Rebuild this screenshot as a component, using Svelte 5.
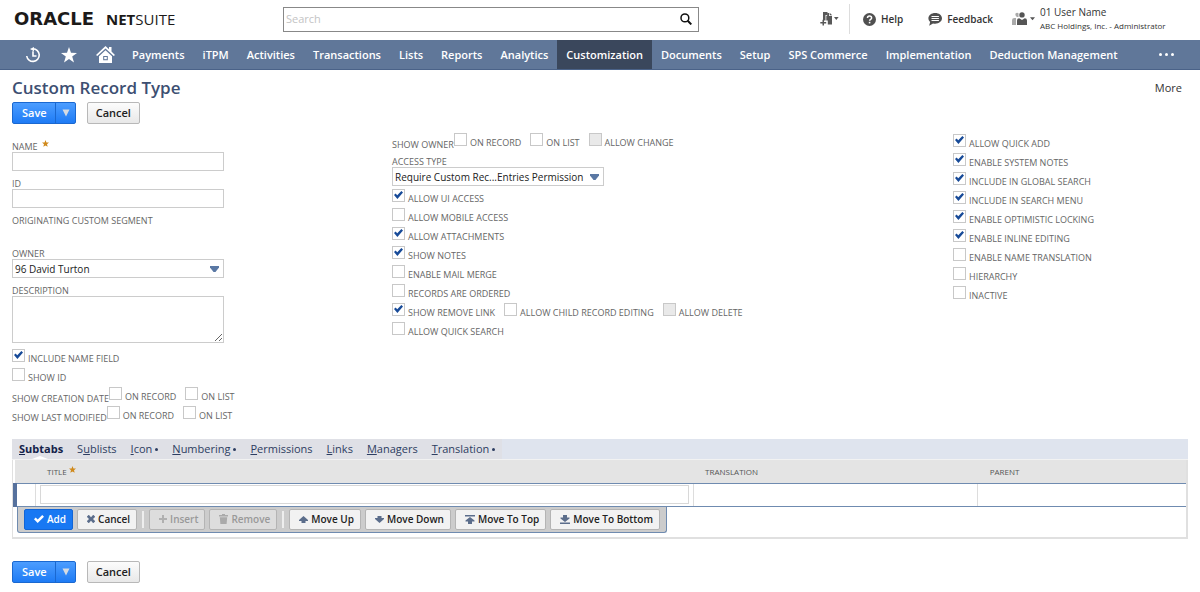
<script>
  const menus = [
    'Payments', 'iTPM', 'Activities', 'Transactions', 'Lists', 'Reports', 'Analytics',
    'Customization', 'Documents', 'Setup', 'SPS Commerce', 'Implementation', 'Deduction Management'
  ];
  const activeMenu = 'Customization';

  const nameOptions = [
    { label: 'INCLUDE NAME FIELD', checked: true },
    { label: 'SHOW ID' }
  ];

  const accessRows = [
    [{ label: 'ALLOW UI ACCESS', checked: true }],
    [{ label: 'ALLOW MOBILE ACCESS' }],
    [{ label: 'ALLOW ATTACHMENTS', checked: true }],
    [{ label: 'SHOW NOTES', checked: true }],
    [{ label: 'ENABLE MAIL MERGE' }],
    [{ label: 'RECORDS ARE ORDERED' }],
    [
      { label: 'SHOW REMOVE LINK', checked: true },
      { label: 'ALLOW CHILD RECORD EDITING' },
      { label: 'ALLOW DELETE', disabled: true }
    ],
    [{ label: 'ALLOW QUICK SEARCH' }]
  ];

  const featureOptions = [
    { label: 'ALLOW QUICK ADD', checked: true },
    { label: 'ENABLE SYSTEM NOTES', checked: true },
    { label: 'INCLUDE IN GLOBAL SEARCH', checked: true },
    { label: 'INCLUDE IN SEARCH MENU', checked: true },
    { label: 'ENABLE OPTIMISTIC LOCKING', checked: true },
    { label: 'ENABLE INLINE EDITING', checked: true },
    { label: 'ENABLE NAME TRANSLATION' },
    { label: 'HIERARCHY' },
    { label: 'INACTIVE' }
  ];

  // Each tab is split around its underlined access key.
  const tabs = [
    { pre: '', key: 'S', post: 'ubtabs' },
    { pre: 'S', key: 'u', post: 'blists' },
    { pre: '', key: 'I', post: 'con', dot: true },
    { pre: '', key: 'N', post: 'umbering', dot: true },
    { pre: '', key: 'P', post: 'ermissions' },
    { pre: '', key: 'L', post: 'inks' },
    { pre: '', key: 'M', post: 'anagers' },
    { pre: '', key: 'T', post: 'ranslation', dot: true }
  ];
  let activeTab = $state(0);
</script>

{#snippet check(item)}
  <label class="check">
    <input type="checkbox" checked={item.checked} disabled={item.disabled} />
    <span>{item.label}</span>
  </label>
{/snippet}

{#snippet saveBar()}
  <div class="actions">
    <div class="split">
      <button type="button" class="save">Save</button>
      <button type="button" class="drop" aria-label="More save options">
        <svg width="8" height="8" viewBox="0 0 8 8"><path d="M0.5 0.5h7L4 7.5z" fill="#d6dbe2" /></svg>
      </button>
    </div>
    <button type="button" class="plain">Cancel</button>
  </div>
{/snippet}

{#snippet star()}
  <svg class="star" width="7" height="7" viewBox="0 0 14 14">
    <path d="M7 0l1.9 4.8 5.1.3-4 3.3 1.4 5.2L7 10.8l-4.4 2.8L4 8.4 0 5.1l5.1-.3z" fill="#d08a1c" />
  </svg>
{/snippet}

<header class="top">
  <a class="logo" href="#home"><span class="oracle">ORACLE</span><span class="netsuite"><b>NET</b>SUITE</span></a>
  <form class="search" role="search">
    <input type="text" placeholder="Search" aria-label="Search" />
    <button type="button" aria-label="Run search">
      <svg width="12" height="12" viewBox="0 0 12 12" fill="none" stroke="#111">
        <circle cx="4.9" cy="4.9" r="3.9" stroke-width="1.5" /><path d="M7.7 7.7L11.3 11.4" stroke-width="2" />
      </svg>
    </button>
  </form>
  <div class="tools">
    <button type="button" class="tool create" aria-label="Create new">
      <svg width="19" height="14" viewBox="0 0 19 14" fill="#585858">
        <path d="M3 0h4.500v3H5.500v5.500H3z" /><path d="M6.300 3.800h.9V1H9v3h3v8.500H7.800V8.500H6.300z" /><path d="M9.700.8l2.500 2.500H9.700z" />
        <path d="M2.500 7.800h1.500v2.100h2.200v1.500H4v2.200H2.500v-2.200H.3V9.900h2.200z" />
        <path d="M14 5h4.600l-2.300 3z" />
      </svg>
    </button>
    <a class="tool help" href="#help">
      <svg width="13" height="13" viewBox="0 0 13 13">
        <circle cx="6.500" cy="6.500" r="6.500" fill="#505050" />
        <path d="M4.500 5.100c0-1.300.9-2 2-2s2.100.7 2.100 1.800c0 1.400-2 1.500-2 2.900" fill="none" stroke="#fff" stroke-width="1.500" />
        <rect x="5.800" y="8.800" width="1.600" height="1.600" fill="#fff" />
      </svg>
      Help
    </a>
    <a class="tool feedback" href="#feedback">
      <svg width="14" height="13" viewBox="0 0 14 13">
        <path d="M7.200 0C11 0 14 2.200 14 5.300s-3 5.400-6.800 5.400c-.8 0-1.500-.1-2.200-.3L1.200 12.800l.9-3.900C1 8 .4 6.700.4 5.300.4 2.200 3.400 0 7.200 0z" fill="#505050" />
        <path d="M3.500 3.500h7.400M3.500 5.500h7.400M3.500 7.500h7.400" stroke="#fff" />
      </svg>
      Feedback
    </a>
    <button type="button" class="tool user">
      <svg width="23" height="14" viewBox="0 0 23 14" fill="#555">
        <path d="M0 13V8.200Q0 6 2.400 6H4v7z" fill="#aaa" /><path d="M3.500 1.500Q5 0 6.500 1.200V5H5Q3 4 3.500 1.500z" fill="#aaa" />
        <circle cx="10" cy="2.900" r="2.700" /><path d="M5 13V8.500Q5 6.300 7.200 6.300L10 8l2.800-1.700Q15 6.300 15 8.500V13z" />
        <path d="M18 5.300h5l-2.500 3z" />
      </svg>
      <span class="who"><span>01 User Name</span><small>ABC Holdings, Inc. - Administrator</small></span>
    </button>
  </div>
</header>

<nav class="menu">
  <a class="icon" href="#recent" aria-label="Recent records">
    <svg width="16" height="16" viewBox="0 0 16 16" fill="none" stroke="#fff">
      <path d="M8 1.800A6.300 6.300 0 1 1 1.700 9" stroke-width="1.600" /><path d="M8 4.200V9h3.500" stroke-width="1.600" />
      <path d="M9 0L5 1.900 9 4.300z" fill="#fff" stroke="none" />
    </svg>
  </a>
  <a class="icon" href="#shortcuts" aria-label="Shortcuts">
    <svg width="16" height="16" viewBox="0 0 16 16" fill="#fff"><path d="M8 0l2 5.700 6 .2-4.800 3.700L13 15.600 8 12.100l-5 3.500 1.800-6L0 5.900l6-.2z" /></svg>
  </a>
  <a class="icon" href="#home" aria-label="Home">
    <svg width="19" height="17" viewBox="0 0 19 17" fill="#fff">
      <path d="M9.500 0L13 3.200V1h2.500v4.500L19 9l-1.300 1.100L9.500 2.500 1.300 10.100 0 9z" />
      <path fill-rule="evenodd" d="M9.500 4.200L16 10.300V17H3v-6.700zM7.200 10v4.200h4.600V10z" /><path d="M8.200 11h2.600v2.200H8.200z" />
    </svg>
  </a>
  {#each menus as menu}
    <a class="item" class:active={menu === activeMenu} href="#{menu}">{menu}</a>
  {/each}
  <button type="button" class="overflow" aria-label="More menus"><i></i><i></i><i></i></button>
</nav>

<main>
  <div class="heading">
    <h1>Custom Record Type</h1>
    <a href="#more">More</a>
  </div>
  {@render saveBar()}

  <form class="fields">
    <div class="col main-col">
      <div class="field">
        <label for="name">NAME {@render star()}</label>
        <input id="name" type="text" />
      </div>
      <div class="field">
        <label for="id">ID</label>
        <input id="id" type="text" />
      </div>
      <div class="field segment"><span class="caption">ORIGINATING CUSTOM SEGMENT</span></div>
      <div class="field">
        <label for="owner">OWNER</label>
        <div class="select">
          <select id="owner"><option>96 David Turton</option></select>
          <svg width="9" height="6" viewBox="0 0 9 6"><path d="M0 0h9v1.500L5.500 6h-2L0 1.500z" fill="#5a78a4" /></svg>
        </div>
      </div>
      <div class="field">
        <label for="description">DESCRIPTION</label>
        <textarea id="description"></textarea>
      </div>
      <div>
        {#each nameOptions as item}
          <div class="row">{@render check(item)}</div>
        {/each}
        {#each ['SHOW CREATION DATE', 'SHOW LAST MODIFIED'] as label}
          <div class="row" role="group" aria-label={label}>
            <span class="lead">{label}</span>
            {@render check({ label: 'ON RECORD' })}
            {@render check({ label: 'ON LIST' })}
          </div>
        {/each}
      </div>
    </div>

    <div class="col access-col">
      <div class="row" role="group" aria-label="SHOW OWNER">
        <span class="lead">SHOW OWNER</span>
        {@render check({ label: 'ON RECORD' })}
        {@render check({ label: 'ON LIST' })}
        {@render check({ label: 'ALLOW CHANGE', disabled: true })}
      </div>
      <div class="field">
        <label for="access">ACCESS TYPE</label>
        <div class="select">
          <select id="access"><option>Require Custom Rec...Entries Permission</option></select>
          <svg width="9" height="6" viewBox="0 0 9 6"><path d="M0 0h9v1.500L5.500 6h-2L0 1.500z" fill="#5a78a4" /></svg>
        </div>
      </div>
      <div>
        {#each accessRows as items}
          <div class="row">
            {#each items as item}{@render check(item)}{/each}
          </div>
        {/each}
      </div>
    </div>

    <div class="col feature-col">
      {#each featureOptions as item}
        <div class="row">{@render check(item)}</div>
      {/each}
    </div>
  </form>

  <section class="panel">
    <div class="tabbar">
      <div class="tabs" role="tablist">
        {#each tabs as tab, i}
          <button type="button" role="tab" aria-selected={i === activeTab} class:active={i === activeTab} onclick={() => (activeTab = i)}>
            <span>{tab.pre}<u>{tab.key}</u>{tab.post}</span>{#if tab.dot}<i></i>{/if}
          </button>
        {/each}
      </div>
    </div>
    <div class="sheet">
      <table>
        <colgroup><col class="c-mark" /><col class="c-title" /><col class="c-translation" /><col /></colgroup>
        <thead>
          <tr><th></th><th><span class="required">TITLE {@render star()}</span></th><th>TRANSLATION</th><th>PARENT</th></tr>
        </thead>
        <tbody>
          <tr><td class="mark"></td><td><input type="text" aria-label="Title" /></td><td></td><td></td></tr>
        </tbody>
      </table>
      <div class="linebar">
        <button type="button" class="add">
          <svg width="10" height="8" viewBox="0 0 10 8"><path d="M0 4.200L1.700 2.500 3.700 4.400 8.200 0 10 1.700 3.700 8z" fill="#fff" /></svg>Add
        </button>
        <button type="button">
          <svg width="8" height="8" viewBox="0 0 8 8"><path d="M0 1.500L1.500 0H2L4 2.200 6 0h.5L8 1.500V2L6 4l2 2v.5L6.500 8H6L4 5.800 2 8h-.5L0 6.500V6l2-2-2-2z" fill="#5b6d8b" /></svg>Cancel
        </button>
        <span class="sep"></span>
        <button type="button" disabled>
          <svg width="8" height="8" viewBox="0 0 8 8"><path d="M3 0h2v3h3v2H5v3H3V5H0V3h3z" fill="#b0b0b0" /></svg>Insert
        </button>
        <button type="button" disabled>
          <svg width="9" height="10" viewBox="0 0 9 10"><path d="M3 0h3v1h3v1.500H0V1h3zM.8 3.300h7.400L7.600 10H1.400z" fill="#aaa" /></svg>Remove
        </button>
        <span class="sep"></span>
        <button type="button">
          <svg width="9" height="7" viewBox="0 0 9 7"><path d="M4.500 0L9 4v1H6.500v2h-4V5H0V4z" fill="#5b6d8b" /></svg>Move Up
        </button>
        <button type="button">
          <svg width="9" height="7" viewBox="0 0 9 7"><path d="M4.500 7L9 3V2H6.500V0h-4v2H0v1z" fill="#5b6d8b" /></svg>Move Down
        </button>
        <button type="button">
          <svg width="10" height="9" viewBox="0 0 10 9"><path d="M0 0h10v1.500H0zM5 2l4.500 3.500v1H7V9H3V6.500H.5v-1z" fill="#5b6d8b" /></svg>Move To Top
        </button>
        <button type="button">
          <svg width="10" height="9" viewBox="0 0 10 9"><path d="M0 9h10V7.500H0zM5 7l4.500-3.500v-1H7V0H3v2.500H.5v1z" fill="#5b6d8b" /></svg>Move To Bottom
        </button>
      </div>
    </div>
  </section>
  {@render saveBar()}
</main>

<style>
  :global(body) {
    margin: 0;
    background: #fff;
    color: #333;
    font: 10px/12px 'Open Sans', 'Noto Sans', sans-serif;
  }
  * { box-sizing: border-box; }
  button, input, select, textarea { font: inherit; color: inherit; margin: 0; }
  button { cursor: pointer; }
  a { color: inherit; text-decoration: none; }
  svg { display: block; flex: none; }

  .top {
    display: grid;
    grid-template-columns: 269fr 416fr 474fr;
    align-items: center;
    height: 40px;
    padding: 0 27px 2px 14px;
  }
  .logo { display: flex; align-items: center; gap: 8px; color: #1c1a19; }
  .oracle { font: bold 18px/20px 'DejaVu Sans', sans-serif; min-width: 84px; }
  .netsuite { font-size: 15px; line-height: 20px; }
  .search { display: flex; height: 25px; border: 1px solid #888; }
  .search input { flex: 1; min-width: 0; border: 0; padding: 0 2px; outline: 0; font-size: 11px; }
  .search input::placeholder { color: #c4c4c4; opacity: 1; }
  .search button { border: 0; background: none; padding: 0 6px; }
  .tools { display: flex; align-items: center; justify-content: flex-end; white-space: nowrap; }
  .tool { display: flex; align-items: center; gap: 5px; border: 0; background: none; padding: 0; font-weight: 600; color: #333; }
  .tool.create { padding-right: 10px; height: 30px; border-right: 1px solid #ddd; }
  .help { padding-left: 13px; }
  .feedback { padding: 0 19px 0 25px; }
  .who { display: flex; flex-direction: column; min-width: 133px; text-align: left; font-weight: 400; line-height: 14px; }
  .who small { font-size: 8px; }

  .menu {
    display: flex;
    align-items: stretch;
    height: 30px;
    padding-left: 15px;
    background: #607799;
    border-bottom: 1px solid #4a6288;
    color: #fff;
    font-weight: 600;
    font-size: 11px;
    line-height: 14px;
    white-space: nowrap;
  }
  .menu a { display: flex; align-items: center; justify-content: center; flex: none; }
  .icon { width: 36px; }
  .item { padding: 0 9px; }
  .item.active { background: #3a475c; }
  .overflow { display: flex; align-items: center; gap: 3px; margin-left: auto; padding: 0 26px 0 0; border: 0; background: none; }
  .overflow i { width: 3px; height: 3px; border-radius: 50%; background: #fff; }

  main { padding: 8px 12px 10px; }
  .heading { display: flex; justify-content: space-between; align-items: flex-start; padding-right: 6px; font-size: 11px; line-height: 20px; }
  h1 { margin: 0 0 4px; font-size: 17px; line-height: 20px; font-weight: 600; color: #3d4f72; }

  .actions { display: flex; gap: 11px; }
  .split { display: flex; border: 1px solid #1a68d0; border-radius: 2px; background: linear-gradient(#4c9dff, #1e7bf5); color: #fff; }
  .split button { height: 20px; border: 0; background: none; font-weight: 600; font-size: 11px; padding: 0 8px 0 9px; }
  .split .drop { padding: 0 5px 0 6px; border-left: 1px solid #1a68d0; }
  .plain { height: 22px; padding: 0 8px; border: 1px solid #b8b8b8; border-radius: 2px; background: linear-gradient(#fcfcfc, #e8e8e8); font-weight: 600; font-size: 11px; color: #222; }

  .fields { display: grid; grid-template-columns: 380fr 561fr 235fr; padding-top: 9px; color: #666; font-size: 9px; white-space: nowrap; }
  .col { display: flex; flex-direction: column; align-items: flex-start; }
  .main-col { gap: 6px; padding-top: 7px; }
  .access-col { gap: 3px; }
  .feature-col { padding-top: 1px; }
  .field { width: 212px; }
  .field label, .caption { display: flex; gap: 4px; height: 12px; line-height: 14px; }
  .field input, .field select, .field textarea {
    display: block; width: 100%; border: 1px solid #ccc; border-radius: 0; background: #fff; padding: 0 2px; color: #222; font-size: 10px;
  }
  .field input, .field select { height: 19px; }
  .field select { appearance: none; padding: 0 16px 0 2px; }
  .field textarea { height: 47px; }
  .segment { height: 27px; }
  .select { position: relative; }
  .select svg { position: absolute; right: 5px; top: 7px; pointer-events: none; }
  .row { display: flex; height: 19px; }
  .lead { padding-top: 6px; }
  .check { display: flex; gap: 3px; margin-right: 9px; }
  .check span { padding-top: 4px; }
  .check input { appearance: none; width: 13px; height: 13px; border: 1px solid #c8c8c8; background: #fff; flex: none; }
  .check input:disabled { background: #e9e9e9; }
  .check input:checked::before {
    content: '';
    display: block;
    width: 9px;
    height: 8px;
    margin: 1px;
    background: #174a98;
    clip-path: polygon(0 50%, 18% 32%, 36% 52%, 82% 0, 100% 20%, 38% 100%);
  }

  .panel { margin: 14px 0 22px; }
  .tabbar { background: #dfe4ee; border-bottom: 1px solid #f2f2f2; }
  .tabs { display: inline-flex; background: #dfe0e6; vertical-align: top; }
  .tabs button { position: relative; display: flex; align-items: center; gap: 3px; height: 20px; padding: 0 7px; border: 0; background: none; color: #2d3d61; font-size: 11px; }
  .tabs button.active { font-weight: 700; color: #14224a; }
  .tabs button.active::after {
    content: ''; position: absolute; left: 20px; bottom: 0; width: 16px; height: 3px; background: #fff; clip-path: polygon(0 100%, 50% 0, 100% 100%);
  }
  .tabs i { width: 3px; height: 3px; border-radius: 50%; background: #2d3d61; }
  .sheet { border: solid #e0e0e0; border-width: 0 2px 2px 1px; padding-bottom: 4px; }
  table { width: 100%; table-layout: fixed; border-collapse: collapse; }
  .c-mark { width: 20px; }
  .c-title { width: 56.2%; }
  .c-translation { width: 24.3%; }
  th { height: 23px; padding: 2px 12px 0; background: #e4e4e4; text-align: left; font-weight: 400; font-size: 8px; color: #555; }
  .required { display: flex; gap: 2px; }
  td { height: 23px; padding: 1px 4px; border: solid #6f8bb0; border-width: 1px 0; }
  td + td { border-left: 1px solid #ddd; }
  .mark { border-left: 4px solid #56719d; }
  td input { display: block; width: 100%; height: 19px; border: 1px solid #d8d8d8; padding: 0 2px; }
  .linebar {
    display: inline-flex; align-items: center; gap: 4px; height: 26px; margin-left: 4px; padding: 0 6px; vertical-align: top;
    background: #ccc; border: 1px solid #6f8bb0; border-top: 0; border-radius: 0 0 3px 3px; white-space: nowrap;
  }
  .linebar button {
    display: flex; align-items: center; gap: 3px; height: 21px; padding: 0 6px 0 9px; border: 1px solid #b4b4b4; border-radius: 2px;
    background: #f2f2f2; font-weight: 600; color: #222;
  }
  .linebar .add { background: #1878f3; border-color: #1265d6; color: #fff; }
  .linebar button:disabled { background: #ddd; color: #999; }
  .sep { width: 2px; height: 17px; margin: 0 1px; background: #eee; }
</style>
